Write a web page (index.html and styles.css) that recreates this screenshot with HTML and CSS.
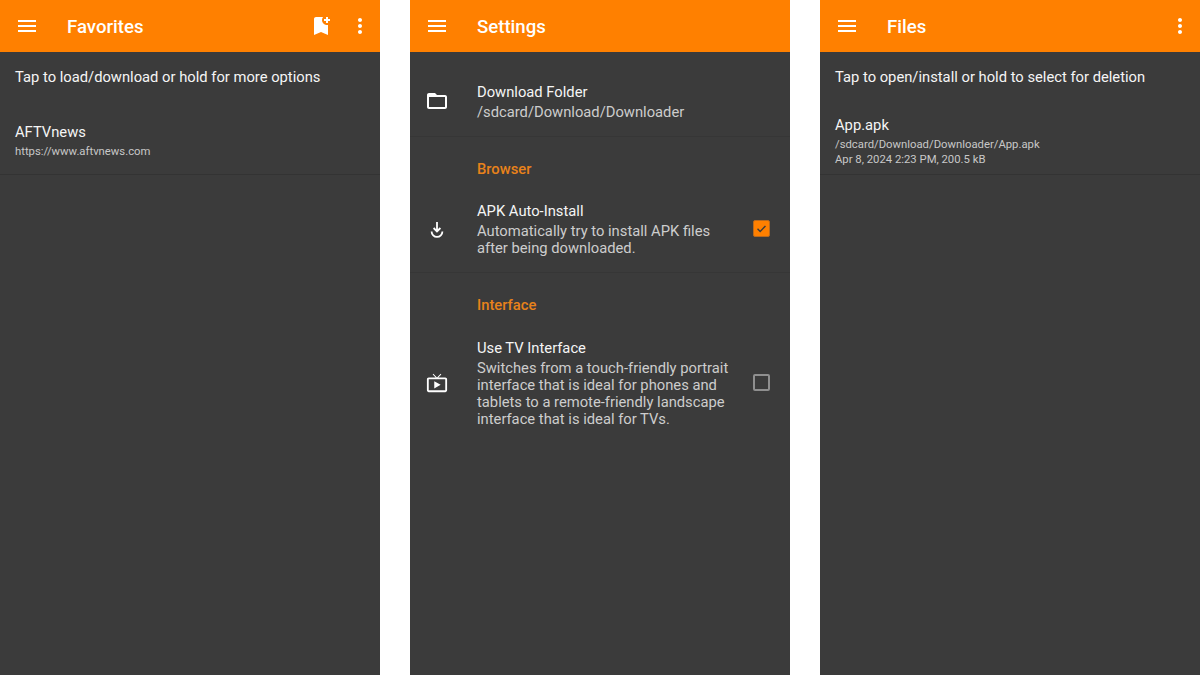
FILE: index.html
```html
<!DOCTYPE html>
<html lang="en">
<head>
    <meta charset="UTF-8">
    <meta name="viewport" content="width=device-width, initial-scale=1.0">
    <title>Downloader screens</title>
    <link rel="stylesheet" href="styles.css">
</head>
<body>
    <div class="screens">
        <!-- Favorites -->
        <section class="phone">
            <header class="appbar">
                <svg class="icon menu-icon" viewBox="0 0 24 24"><path d="M3 18h18v-2H3v2zm0-5h18v-2H3v2zm0-7v2h18V6H3z"/></svg>
                <h1>Favorites</h1>
                <svg class="icon bookmark-icon" viewBox="0 0 24 24"><path d="M21 7h-2v2h-2V7h-2V5h2V3h2v2h2v2zm-2 14l-7-3-7 3V5c0-1.1.9-2 2-2h7c-.64.84-1 1.87-1 3 0 2.76 2.24 5 5 5 .34 0 .68-.03 1-.08V21z"/></svg>
                <svg class="icon more-icon" viewBox="0 0 24 24"><path d="M12 8c1.1 0 2-.9 2-2s-.9-2-2-2-2 .9-2 2 .9 2 2 2zm0 2c-1.1 0-2 .9-2 2s.9 2 2 2 2-.9 2-2-.9-2-2-2zm0 6c-1.1 0-2 .9-2 2s.9 2 2 2 2-.9 2-2-.9-2-2-2z"/></svg>
            </header>
            <p class="hint">Tap to load/download or hold for more options</p>
            <div class="item">
                <div class="item-title">AFTVnews</div>
                <div class="item-sub">https://www.aftvnews.com</div>
            </div>
        </section>

        <!-- Settings -->
        <section class="phone">
            <header class="appbar">
                <svg class="icon menu-icon" viewBox="0 0 24 24"><path d="M3 18h18v-2H3v2zm0-5h18v-2H3v2zm0-7v2h18V6H3z"/></svg>
                <h1>Settings</h1>
            </header>
            <div class="setting first">
                <div class="setting-icon">
                    <svg class="icon" viewBox="0 0 24 24"><path d="M20 6h-8l-2-2H4c-1.1 0-1.99.9-1.99 2L2 18c0 1.1.9 2 2 2h16c1.1 0 2-.9 2-2V8c0-1.1-.9-2-2-2zm0 12H4V8h16v10z"/></svg>
                </div>
                <div class="setting-text">
                    <div class="setting-title">Download Folder</div>
                    <div class="setting-desc">/sdcard/Download/Downloader</div>
                </div>
            </div>
            <h2 class="group">Browser</h2>
            <div class="setting">
                <div class="setting-icon">
                    <svg class="icon" viewBox="0 0 24 24"><path class="line" d="M12 5v9.5M8.6 11l3.4 3.4 3.4-3.4M6.6 14.5a5.4 5.4 0 0 0 10.8 0"/></svg>
                </div>
                <div class="setting-text">
                    <div class="setting-title">APK Auto-Install</div>
                    <div class="setting-desc">Automatically try to install APK files after being downloaded.</div>
                </div>
                <div class="checkbox checked">
                    <svg viewBox="0 0 17 17"><path d="M4 8.8l3 3 6-6.2"/></svg>
                </div>
            </div>
            <h2 class="group">Interface</h2>
            <div class="setting last">
                <div class="setting-icon">
                    <svg class="icon tv-icon" viewBox="0 0 24 24"><path d="M9 10v8l7-4zm12-4h-7.58l3.29-3.29L16 2l-4 4h-.03l-4-4-.69.71L10.56 6H3c-1.1 0-2 .9-2 2v12c0 1.1.9 2 2 2h18c1.1 0 2-.9 2-2V8c0-1.1-.9-2-2-2zm0 14H3V8h18v12z"/></svg>
                </div>
                <div class="setting-text">
                    <div class="setting-title">Use TV Interface</div>
                    <div class="setting-desc">Switches from a touch-friendly portrait interface that is ideal for phones and tablets to a remote-friendly landscape interface that is ideal for TVs.</div>
                </div>
                <div class="checkbox"></div>
            </div>
        </section>

        <!-- Files -->
        <section class="phone">
            <header class="appbar">
                <svg class="icon menu-icon" viewBox="0 0 24 24"><path d="M3 18h18v-2H3v2zm0-5h18v-2H3v2zm0-7v2h18V6H3z"/></svg>
                <h1>Files</h1>
                <svg class="icon more-icon push" viewBox="0 0 24 24"><path d="M12 8c1.1 0 2-.9 2-2s-.9-2-2-2-2 .9-2 2 .9 2 2 2zm0 2c-1.1 0-2 .9-2 2s.9 2 2 2 2-.9 2-2-.9-2-2-2zm0 6c-1.1 0-2 .9-2 2s.9 2 2 2 2-.9 2-2-.9-2-2-2z"/></svg>
            </header>
            <p class="hint">Tap to open/install or hold to select for deletion</p>
            <div class="item file">
                <div class="item-title">App.apk</div>
                <div class="item-sub">/sdcard/Download/Downloader/App.apk</div>
                <div class="item-sub">Apr 8, 2024 2:23 PM, 200.5 kB</div>
            </div>
        </section>
    </div>
</body>
</html>
```

FILE: styles.css
```css
body {
    margin: 0;
    background-color: #fff;
    font-family: Roboto, "Liberation Sans", sans-serif;
    color: #fff;
}
.screens {
    display: flex;
    gap: 30px;
    height: 675px;
    overflow: hidden;
}
.phone {
    width: 380px;
    background-color: #3b3b3b;
}
.appbar {
    display: flex;
    align-items: center;
    height: 52px;
    padding-left: 15px;
    background-color: #ff8000;
}
.appbar h1 {
    margin: 2px 0 0 28px;
    font-size: 18.6px;
    font-weight: 500;
    color: #fff;
}
.icon {
    display: block;
    width: 24px;
    height: 24px;
    flex-shrink: 0;
    fill: #fff;
}
.bookmark-icon {
    margin-left: auto;
}
.more-icon {
    margin: 0 8px 0 15px;
}
.more-icon.push {
    margin-left: auto;
}
.hint {
    margin: 0;
    padding: 15px 15px 28px;
    font-size: 14.75px;
    line-height: 20px;
    color: #f5f5f5;
}
.item {
    padding: 7px 15px 12px;
    border-bottom: 1px solid #333;
}
.item-title {
    font-size: 14.75px;
    line-height: 20px;
    color: #f5f5f5;
}
.item-sub {
    font-size: 11.3px;
    line-height: 20px;
    color: #c8c8c8;
}
.item.file {
    padding: 0 15px 7px;
}
.file .item-title {
    margin-bottom: 2px;
}
.file .item-sub {
    line-height: 15px;
}
.setting {
    display: flex;
    align-items: center;
    padding: 22px 20px 14px 0;
    border-bottom: 1px solid #363636;
}
.setting.first {
    padding-top: 30px;
    padding-bottom: 14px;
}
.setting.last {
    padding-top: 23px;
    border-bottom: none;
}
.setting-icon {
    display: flex;
    justify-content: center;
    width: 54px;
    margin-right: 13px;
    flex-shrink: 0;
}
.first .setting-icon {
    margin-bottom: 2px;
}
.tv-icon {
    width: 22px;
    height: 22px;
}
.line {
    fill: none;
    stroke: #fff;
    stroke-width: 1.8;
}
.setting-text {
    flex: 1;
}
.setting-title {
    font-size: 14.75px;
    line-height: 20px;
    color: #f5f5f5;
}
.setting-desc {
    margin-top: 2px;
    font-size: 14.75px;
    line-height: 17.3px;
    color: #cdcdcd;
}
.setting.first .setting-desc {
    margin-top: 0;
    line-height: 20px;
}
.group {
    margin: 0;
    padding: 22px 0 0 67px;
    font-size: 14.75px;
    font-weight: 500;
    line-height: 20px;
    color: #e8821a;
}
.checkbox {
    box-sizing: border-box;
    width: 17px;
    height: 17px;
    margin: 0 0 2px 16px;
    flex-shrink: 0;
    border: 2px solid #8f8f8f;
    border-radius: 2px;
}
.checkbox.checked {
    border: 1px solid #b9691c;
    background-color: #ff8000;
}
.checkbox svg {
    display: block;
    width: 15px;
    height: 15px;
    fill: none;
    stroke: #3b3b3b;
    stroke-width: 1.6;
}
```
